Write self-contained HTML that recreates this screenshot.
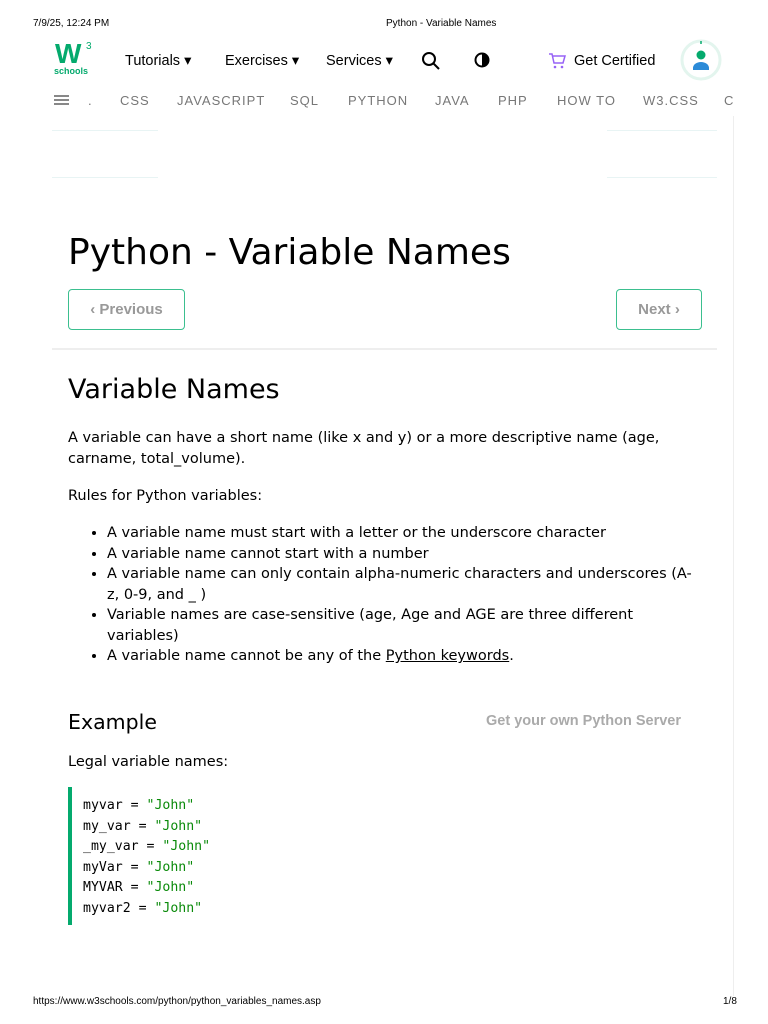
<!DOCTYPE html>
<html><head><meta charset="utf-8"><style>
*{margin:0;padding:0;box-sizing:border-box}
body{width:768px;height:1024px;background:#fff;font-family:"Liberation Sans",sans-serif;color:#000;position:relative;overflow:hidden}
.a{position:absolute;white-space:nowrap}
.hdr{font-size:10px}
.nav{font-size:14.5px;color:#000}
.tn{font-size:13px;letter-spacing:1px;color:#777;top:93px}
p,li{font-size:14.5px;line-height:20.5px;font-family:"DejaVu Sans",sans-serif}
.code{font-family:"DejaVu Sans Mono",monospace;font-size:13.2px;line-height:20.6px}
.s{color:#0a8a0a}
.btn{position:absolute;border:1.5px solid #3bbf8f;border-radius:4px;color:#999;font-size:15px;font-weight:bold;display:flex;align-items:center;justify-content:center}
</style></head><body>
<div class="a hdr" style="left:33px;top:18px">7/9/25, 12:24 PM</div>
<div class="a hdr" style="left:386px;top:18px">Python - Variable Names</div>

<div class="a" style="left:55px;top:40px;color:#04aa6d;font-weight:bold;font-size:28px;line-height:28px">W</div>
<div class="a" style="left:86px;top:41px;color:#04aa6d;font-size:10px">3</div>
<div class="a" style="left:54px;top:66px;color:#04aa6d;font-weight:bold;font-size:9px">schools</div>

<div class="a nav" style="left:125px;top:53px">Tutorials ▾</div>
<div class="a nav" style="left:225px;top:53px">Exercises ▾</div>
<div class="a nav" style="left:326px;top:53px">Services ▾</div>
<svg class="a" style="left:421px;top:51px" width="20" height="20" viewBox="0 0 20 20"><circle cx="8" cy="8" r="6" fill="none" stroke="#000" stroke-width="2"/><path d="M12.5 12.5L18 18" stroke="#000" stroke-width="2"/></svg>
<svg class="a" style="left:474px;top:52px" width="16" height="16" viewBox="0 0 16 16"><circle cx="8" cy="8" r="6.5" fill="none" stroke="#000" stroke-width="2"/><path d="M8 1.5A6.5 6.5 0 0 1 8 14.5Z" fill="#000"/></svg>
<svg class="a" style="left:548px;top:52px" width="18" height="18" viewBox="0 0 18 18"><path d="M1 2h3l2 9h9l2-7H5" fill="none" stroke="#9763f6" stroke-width="1.5"/><circle cx="7" cy="15" r="1.3" fill="#9763f6"/><circle cx="14" cy="15" r="1.3" fill="#9763f6"/></svg>
<div class="a nav" style="left:574px;top:53px">Get Certified</div>
<svg class="a" style="left:679px;top:38px" width="44" height="44" viewBox="0 0 44 44"><circle cx="22" cy="22" r="19" fill="none" stroke="#e3f5ee" stroke-width="3"/><path d="M22 3v3" stroke="#04aa6d" stroke-width="1.5"/><circle cx="22" cy="17" r="4.5" fill="#04aa6d"/><path d="M14 30a8 6 0 0 1 16 0v2H14z" fill="#2c8bd8"/></svg>

<div class="a" style="left:54px;top:95px;width:15px;height:2px;background:#888;box-shadow:0 4px 0 #888,0 8px 0 #888"></div>
<div class="a tn" style="left:88px">.</div>
<div class="a tn" style="left:120px">CSS</div>
<div class="a tn" style="left:177px">JAVASCRIPT</div>
<div class="a tn" style="left:290px">SQL</div>
<div class="a tn" style="left:348px">PYTHON</div>
<div class="a tn" style="left:435px">JAVA</div>
<div class="a tn" style="left:498px">PHP</div>
<div class="a tn" style="left:557px">HOW TO</div>
<div class="a tn" style="left:643px">W3.CSS</div>
<div class="a tn" style="left:724px">C</div>
<div class="a" style="left:733px;top:116px;width:1px;height:880px;background:#eee"></div>
<div class="a" style="left:52px;top:130px;width:106px;height:1px;background:#e8f4f4"></div>
<div class="a" style="left:52px;top:177px;width:106px;height:1px;background:#e8f4f4"></div>
<div class="a" style="left:607px;top:130px;width:110px;height:1px;background:#e8f4f4"></div>
<div class="a" style="left:607px;top:177px;width:110px;height:1px;background:#e8f4f4"></div>

<div class="a" style="left:68px;top:232px;font-size:36px;font-family:'DejaVu Sans',sans-serif">Python - Variable Names</div>
<div class="btn" style="left:68px;top:289px;width:117px;height:41px">‹ Previous</div>
<div class="btn" style="left:616px;top:289px;width:86px;height:41px">Next ›</div>
<div class="a" style="left:52px;top:348px;width:665px;height:2px;background:#eee"></div>

<div class="a" style="left:68px;top:374px;font-size:27px;font-family:'DejaVu Sans',sans-serif">Variable Names</div>
<div class="a" style="left:68px;top:428px;width:640px;white-space:normal"><p>A variable can have a short name (like x and y) or a more descriptive name (age, carname, total_volume).</p></div>
<div class="a" style="left:68px;top:486px"><p>Rules for Python variables:</p></div>
<ul class="a" style="left:88px;top:523px;width:612px;white-space:normal;padding-left:19px">
<li>A variable name must start with a letter or the underscore character</li>
<li>A variable name cannot start with a number</li>
<li>A variable name can only contain alpha-numeric characters and underscores (A-z, 0-9, and _ )</li>
<li>Variable names are case-sensitive (age, Age and AGE are three different variables)</li>
<li>A variable name cannot be any of the <u>Python keywords</u>.</li>
</ul>
<div class="a" style="left:68px;top:710px;font-size:20.5px;font-family:'DejaVu Sans',sans-serif">Example</div>
<div class="a" style="left:486px;top:713px;font-size:14.5px;font-weight:bold;color:#aaa">Get your own Python Server</div>
<div class="a" style="left:68px;top:752px"><p>Legal variable names:</p></div>
<div class="a" style="left:68px;top:787px;width:4px;height:138px;background:#04aa6d"></div>
<div class="a code" style="left:83px;top:796px">myvar = <span class="s">"John"</span><br>my_var = <span class="s">"John"</span><br>_my_var = <span class="s">"John"</span><br>myVar = <span class="s">"John"</span><br>MYVAR = <span class="s">"John"</span><br>myvar2 = <span class="s">"John"</span></div>

<div class="a hdr" style="left:33px;top:996px">https://www.w3schools.com/python/python_variables_names.asp</div>
<div class="a hdr" style="left:723px;top:996px">1/8</div>
</body></html>
